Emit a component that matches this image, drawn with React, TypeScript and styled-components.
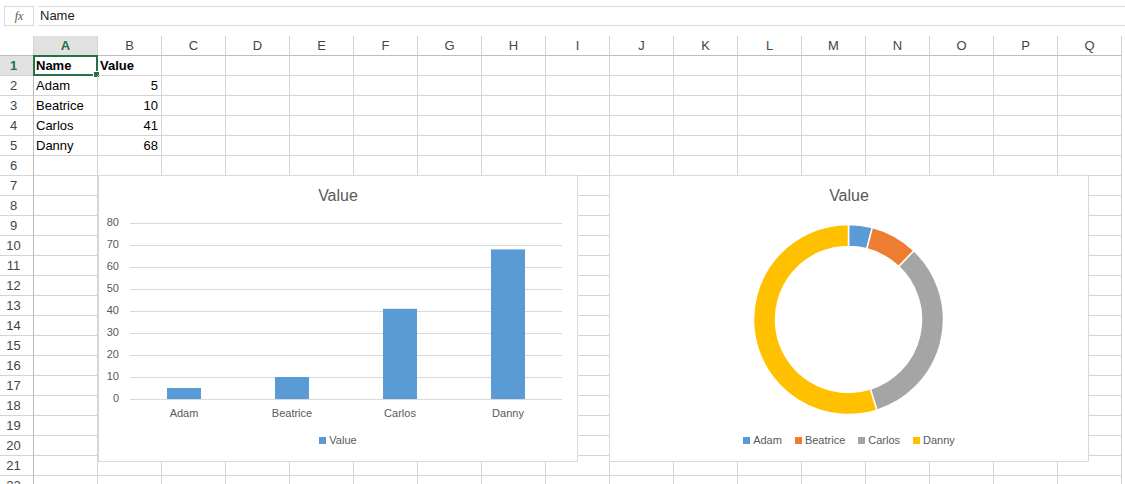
import React from 'react'
import styled, { createGlobalStyle } from 'styled-components'

const GlobalStyle = createGlobalStyle`
  html, body {
    margin: 0;
    padding: 0;
    background: #ffffff;
    font-family: 'Liberation Sans', Arial, sans-serif;
    overflow: hidden;
  }
`

const COLUMNS = 'ABCDEFGHIJKLMNOPQ'.split('')
const ROW_COUNT = 22
const GREEN = '#217346'
const TEXT_GREY = '#595959'

type Item = { name: string; value: number; color: string }

const data: Item[] = [
  { name: 'Adam', value: 5, color: '#5b9bd5' },
  { name: 'Beatrice', value: 10, color: '#ed7d31' },
  { name: 'Carlos', value: 41, color: '#a5a5a5' },
  { name: 'Danny', value: 68, color: '#ffc000' },
]

const Page = styled.div`
  width: 1125px;
  height: 484px;
  overflow: hidden;
  background: #fff;
`

const FormulaBar = styled.div`
  display: flex;
  align-items: stretch;
  height: 20px;
  margin-top: 6px;
  gap: 4px;
  padding-left: 4px;
`

const FxBox = styled.div`
  width: 30px;
  box-sizing: border-box;
  border: 1px solid #dadada;
  display: flex;
  align-items: center;
  justify-content: center;
  font-family: 'Liberation Serif', 'Times New Roman', serif;
  font-style: italic;
  font-size: 12px;
  color: #555;
`

const FormulaInput = styled.div`
  flex: 1;
  box-sizing: border-box;
  border-top: 1px solid #dadada;
  border-bottom: 1px solid #dadada;
  padding-left: 2px;
  font-size: 13px;
  line-height: 18px;
  color: #222;
`

const Sheet = styled.div`
  position: relative;
  margin-top: 10px;
  display: grid;
  grid-template-columns: 34px repeat(17, 64px);
  grid-auto-rows: 20px;
`

const ColHeader = styled.div<{ $active?: boolean }>`
  box-sizing: border-box;
  border-right: 1px solid #d4d4d4;
  border-bottom: 1px solid #bdbdbd;
  background: ${(p) => (p.$active ? '#e1e1e1' : '#fff')};
  color: ${(p) => (p.$active ? GREEN : '#444')};
  font-weight: ${(p) => (p.$active ? 'bold' : 'normal')};
  font-size: 13px;
  line-height: 19px;
  text-align: center;
`

const RowHeader = styled.div<{ $active?: boolean }>`
  box-sizing: border-box;
  border-right: 1px solid #bdbdbd;
  border-bottom: 1px solid #d4d4d4;
  background: ${(p) => (p.$active ? '#e1e1e1' : '#fff')};
  color: ${(p) => (p.$active ? GREEN : '#444')};
  font-weight: ${(p) => (p.$active ? 'bold' : 'normal')};
  font-size: 13px;
  line-height: 19px;
  text-align: center;
  padding-right: 6px;
`

const Cell = styled.div<{ $numeric?: boolean; $bold?: boolean; $selected?: boolean }>`
  position: relative;
  box-sizing: border-box;
  border-right: 1px solid #d4d4d4;
  border-bottom: 1px solid #d4d4d4;
  font-size: 13px;
  line-height: 19px;
  color: #000;
  white-space: nowrap;
  padding: ${(p) => (p.$numeric ? '0 3px 0 0' : '0 0 0 2px')};
  text-align: ${(p) => (p.$numeric ? 'right' : 'left')};
  font-weight: ${(p) => (p.$bold ? 'bold' : 'normal')};

  ${(p) =>
    p.$selected &&
    `
    &::before {
      content: '';
      position: absolute;
      left: -1px;
      top: -1px;
      right: -1px;
      bottom: -1px;
      border: 2px solid ${GREEN};
      pointer-events: none;
    }
    &::after {
      content: '';
      position: absolute;
      right: -3px;
      bottom: -3px;
      width: 5px;
      height: 5px;
      background: ${GREEN};
      border: 1px solid #fff;
    }
  `}
`

const ChartBox = styled.div<{ $left: number }>`
  position: absolute;
  left: ${(p) => p.$left}px;
  top: 139px;
  width: 480px;
  height: 287px;
  box-sizing: border-box;
  border: 1px solid #d9d9d9;
  background: #fff;
  display: flex;
  flex-direction: column;
  align-items: stretch;
`

const ChartTitle = styled.div`
  padding-top: 9px;
  height: 40px;
  box-sizing: border-box;
  line-height: 22px;
  font-size: 16px;
  text-align: center;
  color: ${TEXT_GREY};
`

const Plot = styled.svg`
  display: block;
  width: 478px;
  height: 210px;
`

const Legend = styled.div`
  display: flex;
  justify-content: center;
  gap: 13px;
  padding-top: 7px;
  line-height: 14px;
  font-size: 11px;
  color: ${TEXT_GREY};
`

const LegendItem = styled.div`
  display: flex;
  align-items: center;
  gap: 3px;
`

const Swatch = styled.span<{ $color: string }>`
  width: 7px;
  height: 7px;
  background: ${(p) => p.$color};
`

const cellValues: Record<string, { text: string; numeric?: boolean; bold?: boolean }> = {
  A1: { text: 'Name', bold: true },
  B1: { text: 'Value', bold: true },
}
data.forEach((d, i) => {
  cellValues[`A${i + 2}`] = { text: d.name }
  cellValues[`B${i + 2}`] = { text: String(d.value), numeric: true }
})

const BarChart: React.FC = () => {
  const base = 183
  const scale = 2.2
  const ticks = [0, 10, 20, 30, 40, 50, 60, 70, 80]
  const left = 31
  const band = 108
  return (
    <ChartBox $left={98}>
      <ChartTitle>Value</ChartTitle>
      <Plot viewBox='0 0 478 210'>
        {ticks.map((t) => (
          <g key={t}>
            <line x1={left} x2={left + band * 4} y1={base - t * scale + 0.5} y2={base - t * scale + 0.5} stroke='#d9d9d9' strokeWidth={1} />
            <text x={20} y={base - t * scale} textAnchor='end' dominantBaseline='middle' fontSize={11} fill={TEXT_GREY} fontFamily='Liberation Sans, Arial, sans-serif'>
              {t}
            </text>
          </g>
        ))}
        {data.map((d, i) => {
          const cx = left + band * i + band / 2
          const h = d.value * scale
          return (
            <g key={d.name}>
              <rect x={cx - 17} y={base - h} width={34} height={h} fill='#5b9bd5' />
              <text x={cx} y={198} textAnchor='middle' dominantBaseline='middle' fontSize={11} fill={TEXT_GREY} fontFamily='Liberation Sans, Arial, sans-serif'>
                {d.name}
              </text>
            </g>
          )
        })}
      </Plot>
      <Legend>
        <LegendItem>
          <Swatch $color='#5b9bd5' />
          Value
        </LegendItem>
      </Legend>
    </ChartBox>
  )
}

const arcPath = (cx: number, cy: number, R: number, r: number, a0: number, a1: number) => {
  const pt = (rad: number, a: number) => [cx + rad * Math.cos(a), cy + rad * Math.sin(a)]
  const large = a1 - a0 > Math.PI ? 1 : 0
  const [x0, y0] = pt(R, a0)
  const [x1, y1] = pt(R, a1)
  const [x2, y2] = pt(r, a1)
  const [x3, y3] = pt(r, a0)
  return `M${x0} ${y0} A${R} ${R} 0 ${large} 1 ${x1} ${y1} L${x2} ${y2} A${r} ${r} 0 ${large} 0 ${x3} ${y3} Z`
}

const DonutChart: React.FC = () => {
  const total = data.reduce((s, d) => s + d.value, 0)
  let angle = -Math.PI / 2
  const slices = data.map((d) => {
    const start = angle
    angle += (d.value / total) * Math.PI * 2
    return { ...d, start, end: angle }
  })
  return (
    <ChartBox $left={609}>
      <ChartTitle>Value</ChartTitle>
      <Plot viewBox='0 0 478 210'>
        {slices.map((s) => (
          <path key={s.name} d={arcPath(238.5, 103.5, 95, 73, s.start, s.end)} fill={s.color} stroke='#fff' strokeWidth={1.5} />
        ))}
      </Plot>
      <Legend>
        {data.map((d) => (
          <LegendItem key={d.name}>
            <Swatch $color={d.color} />
            {d.name}
          </LegendItem>
        ))}
      </Legend>
    </ChartBox>
  )
}

export default function App() {
  return (
    <Page>
      <GlobalStyle />
      <FormulaBar>
        <FxBox>fx</FxBox>
        <FormulaInput>Name</FormulaInput>
      </FormulaBar>
      <Sheet>
        <ColHeader />
        {COLUMNS.map((c) => (
          <ColHeader key={c} $active={c === 'A'}>
            {c}
          </ColHeader>
        ))}
        {Array.from({ length: ROW_COUNT }, (_, i) => i + 1).map((row) => (
          <React.Fragment key={row}>
            <RowHeader $active={row === 1}>{row}</RowHeader>
            {COLUMNS.map((c) => {
              const v = cellValues[`${c}${row}`]
              return (
                <Cell key={c} $numeric={v?.numeric} $bold={v?.bold} $selected={c === 'A' && row === 1}>
                  {v?.text}
                </Cell>
              )
            })}
          </React.Fragment>
        ))}
        <BarChart />
        <DonutChart />
      </Sheet>
    </Page>
  )
}
